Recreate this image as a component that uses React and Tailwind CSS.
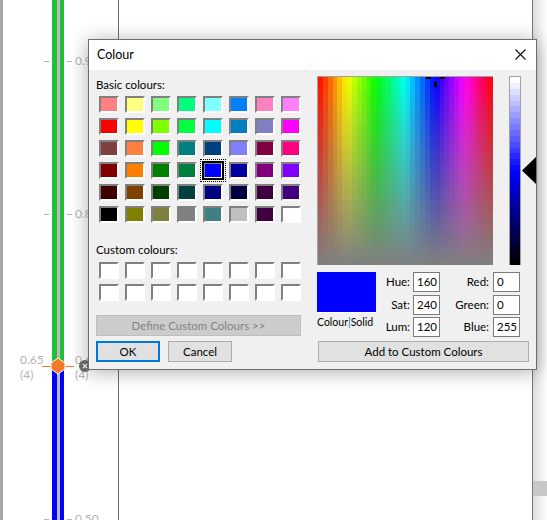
const basicColours = [
  ["#ff8080", "#ffff80", "#80ff80", "#00ff80", "#80ffff", "#0080ff", "#ff80c0", "#ff80ff"],
  ["#ff0000", "#ffff00", "#80ff00", "#00ff40", "#00ffff", "#0080c0", "#8080c0", "#ff00ff"],
  ["#804040", "#ff8040", "#00ff00", "#008080", "#004080", "#8080ff", "#800040", "#ff0080"],
  ["#800000", "#ff8000", "#008000", "#008040", "#0000ff", "#0000a0", "#800080", "#8000ff"],
  ["#400000", "#804000", "#004000", "#004040", "#000080", "#000040", "#400040", "#400080"],
  ["#000000", "#808000", "#808040", "#808080", "#408080", "#c0c0c0", "#400040", "#ffffff"],
];
const customColours = Array(16).fill("#ffffff");
const SELECTED = 28;
const HUE_STEPS = 36;
const axisTicks = [
  { y: 61, label: "0.9" },
  { y: 214, label: "0.8" },
  { y: 519, label: "0.50" },
];

const range = (n) => Array.from({ length: n }, (_, i) => i);

function Swatch({ colour, selected }) {
  return (
    <div className="relative w-[20px] h-[17px]">
      <div
        className="w-full h-full border-2 border-t-[#808080] border-l-[#808080] border-r-white border-b-white"
        style={{ backgroundColor: colour }}
      />
      {selected && (
        <>
          <div className="absolute -inset-[1px] border-2 border-black" />
          <div className="absolute -inset-[3px] border border-dotted border-black" />
        </>
      )}
    </div>
  );
}

function Spectrum() {
  const xs = range(HUE_STEPS + 1).map((c) => Math.round((c * 175) / HUE_STEPS));
  const ys = range(33).map((r) => Math.round((r * 188) / 32));
  return (
    <svg width="175" height="188" viewBox="0 0 175 188" shapeRendering="crispEdges" className="block">
      {range(32).map((r) =>
        range(HUE_STEPS).map((c) => (
          <rect
            key={r + "-" + c}
            x={xs[c]}
            y={ys[r]}
            width={xs[c + 1] - xs[c]}
            height={ys[r + 1] - ys[r]}
            fill={`hsl(${((c + 0.5) / HUE_STEPS) * 360}, ${100 - ((r + 0.5) / 32) * 100}%, 50%)`}
          />
        ))
      )}
      <rect x="108" y="0" width="5" height="2" fill="#000" />
      <rect x="122" y="0" width="5" height="2" fill="#000" />
      <rect x="116" y="5" width="3" height="5" fill="#000" />
    </svg>
  );
}

function LumBar() {
  const ys = range(33).map((r) => Math.round((r * 188) / 32));
  return (
    <svg width="10" height="188" viewBox="0 0 10 188" shapeRendering="crispEdges" className="block">
      {range(32).map((r) => (
        <rect
          key={r}
          x="0"
          y={ys[r]}
          width="10"
          height={ys[r + 1] - ys[r]}
          fill={`hsl(240, 100%, ${100 - (r / 31) * 100}%)`}
        />
      ))}
    </svg>
  );
}

function Field({ label, value, wide }) {
  return (
    <div className="flex items-center h-[20px]">
      <div className={wide ? "w-[49px] mr-[4px] text-right" : "w-[34px] mr-[3px] text-right"}>{label}</div>
      <div className="w-[27px] h-[20px] bg-white border border-[#7a7a7a] pl-[3px] leading-[17px]">{value}</div>
    </div>
  );
}

function Dialog() {
  return (
    <div className="absolute left-[88px] top-[39px] w-[449px] h-[331px] bg-[#f0f0f0] border border-[#6d6d6d] shadow-[0_2px_18px_rgba(0,0,0,0.32)] text-[11.5px] text-black">
      <div className="h-[30px] bg-white flex items-center justify-between pl-[8px] pr-[10px]">
        <span className="text-[12.5px]">Colour</span>
        <svg width="11" height="11" viewBox="0 0 11 11" fill="none" stroke="#111" strokeWidth="1.1" className="mb-[2px]">
          <path d="M0.5 0.5 L10.5 10.5 M10.5 0.5 L0.5 10.5" />
        </svg>
      </div>
      <div className="flex">
        <div className="w-[228px] shrink-0 pl-[7px] pt-[6px]">
          <div className="h-[17px] leading-[17px]">Basic colours:</div>
          <div className="grid grid-cols-[repeat(8,20px)] gap-x-[6px] gap-y-[5px] ml-[3px] mt-[3px]">
            {basicColours.flat().map((c, i) => (
              <Swatch key={i} colour={c} selected={i === SELECTED} />
            ))}
          </div>
          <div className="h-[17px] leading-[17px] mt-[18px]">Custom colours:</div>
          <div className="grid grid-cols-[repeat(8,20px)] gap-x-[6px] gap-y-[5px] ml-[3px] mt-[4px]">
            {customColours.map((c, i) => (
              <Swatch key={i} colour={c} />
            ))}
          </div>
          <div className="w-[205px] h-[21px] mt-[14px] pt-px bg-[#cccccc] border border-[#bfbfbf] text-[#838383] flex items-center justify-center">
            Define Custom Colours &gt;&gt;
          </div>
          <div className="flex gap-[8px] mt-[5px]">
            <div className="w-[64px] h-[21px] pt-px bg-[#e1e1e1] border-2 border-[#0078d7] flex items-center justify-center">OK</div>
            <div className="w-[64px] h-[21px] pt-px bg-[#e1e1e1] border border-[#adadad] flex items-center justify-center">Cancel</div>
          </div>
        </div>
        <div className="pt-[6px]">
          <div className="flex">
            <div className="shrink-0 border-t border-l border-[#a0a0a0]">
              <Spectrum />
            </div>
            <div className="shrink-0 ml-[16px] border-t border-x border-[#a0a0a0]">
              <LumBar />
            </div>
            <svg width="14" height="27" viewBox="0 0 14 27" className="shrink-0 ml-[1px] mt-[81px]">
              <polygon points="0,13.5 14,0 14,27" fill="#000" />
            </svg>
          </div>
          <div className="flex mt-[7px]">
            <div className="w-[59px]">
              <div className="h-[41px] bg-[#0000ff] border-b border-white" />
              <div className="h-[18px] leading-[18px] text-[10.5px] whitespace-nowrap">
                Colour<span className="text-[#0078d7]">|</span>Solid
              </div>
            </div>
            <div className="flex flex-col gap-[2.5px]">
              <Field label="Hue:" value="160" />
              <Field label="Sat:" value="240" />
              <Field label="Lum:" value="120" />
            </div>
            <div className="flex flex-col gap-[2.5px]">
              <Field label="Red:" value="0" wide />
              <Field label="Green:" value="0" wide />
              <Field label="Blue:" value="255" wide />
            </div>
          </div>
          <div className="w-[211px] h-[21px] mt-[4px] ml-[1px] pt-px bg-[#e1e1e1] border border-[#adadad] flex items-center justify-center">
            Add to Custom Colours
          </div>
        </div>
      </div>
    </div>
  );
}

function Chart() {
  return (
    <div className="absolute inset-0 flex text-[12px] text-[#b4b4b4]">
      <div className="w-[3px] bg-[#a6a6a6]" />
      <div className="w-[12px] ml-[49px] flex justify-between relative bg-[#b9b9b9]">
        <div className="w-[5px] flex flex-col">
          <div className="h-[366px] bg-[#20bf37]" />
          <div className="flex-1 bg-[#0000ff]" />
        </div>
        <div className="w-[4px] flex flex-col">
          <div className="h-[366px] bg-[#20bf37]" />
          <div className="flex-1 bg-[#0000ff]" />
        </div>
      </div>
      <div className="w-px ml-[54px] bg-[#6e6e6e]" />
      <div className="w-px ml-[413px] bg-[#7a7a7a]" />
      <div className="w-[14px] bg-gradient-to-r from-[#dcdcdc] to-white flex flex-col">
        <div className="h-[15px] mt-[481px] bg-[#c8c8c8]" />
      </div>

      {axisTicks.map((t) => (
        <div key={t.y} className="absolute left-[44px] flex items-center h-[16px]" style={{ top: t.y - 8 }}>
          <div className="w-[5px] h-px bg-[#b4b4b4]" />
          <div className="w-[5px] h-px bg-[#b4b4b4] ml-[18px]" />
          <div className="ml-[3px]">{t.label}</div>
        </div>
      ))}
      <div className="absolute left-[20px] top-[352px] leading-[15px]">
        0.65
        <br />
        (4)
      </div>
      <div className="absolute left-[75px] top-[352px] leading-[15px]">
        0.6
        <br />
        (4)
      </div>

      <div className="absolute left-[42px] top-[366px] w-[32px] h-px bg-[#f47a2a]" />
      <svg width="16" height="18" viewBox="0 0 16 18" className="absolute left-[50px] top-[357px]">
        <polygon points="8,1 15,6 15,12 8,17 1,12 1,6" fill="#f47a2a" stroke="#fff" strokeWidth="1" />
      </svg>
      <svg width="12" height="12" viewBox="0 0 12 12" className="absolute left-[79px] top-[360px]">
        <circle cx="6" cy="6" r="6" fill="#6f6f6f" />
        <path d="M4 4 L8 8 M8 4 L4 8" stroke="#fff" strokeWidth="1.2" />
      </svg>
    </div>
  );
}

export default function App() {
  return (
    <div className="relative w-[547px] h-[520px] overflow-hidden bg-white font-['Lato','Noto_Sans',sans-serif]">
      <Chart />
      <Dialog />
    </div>
  );
}
